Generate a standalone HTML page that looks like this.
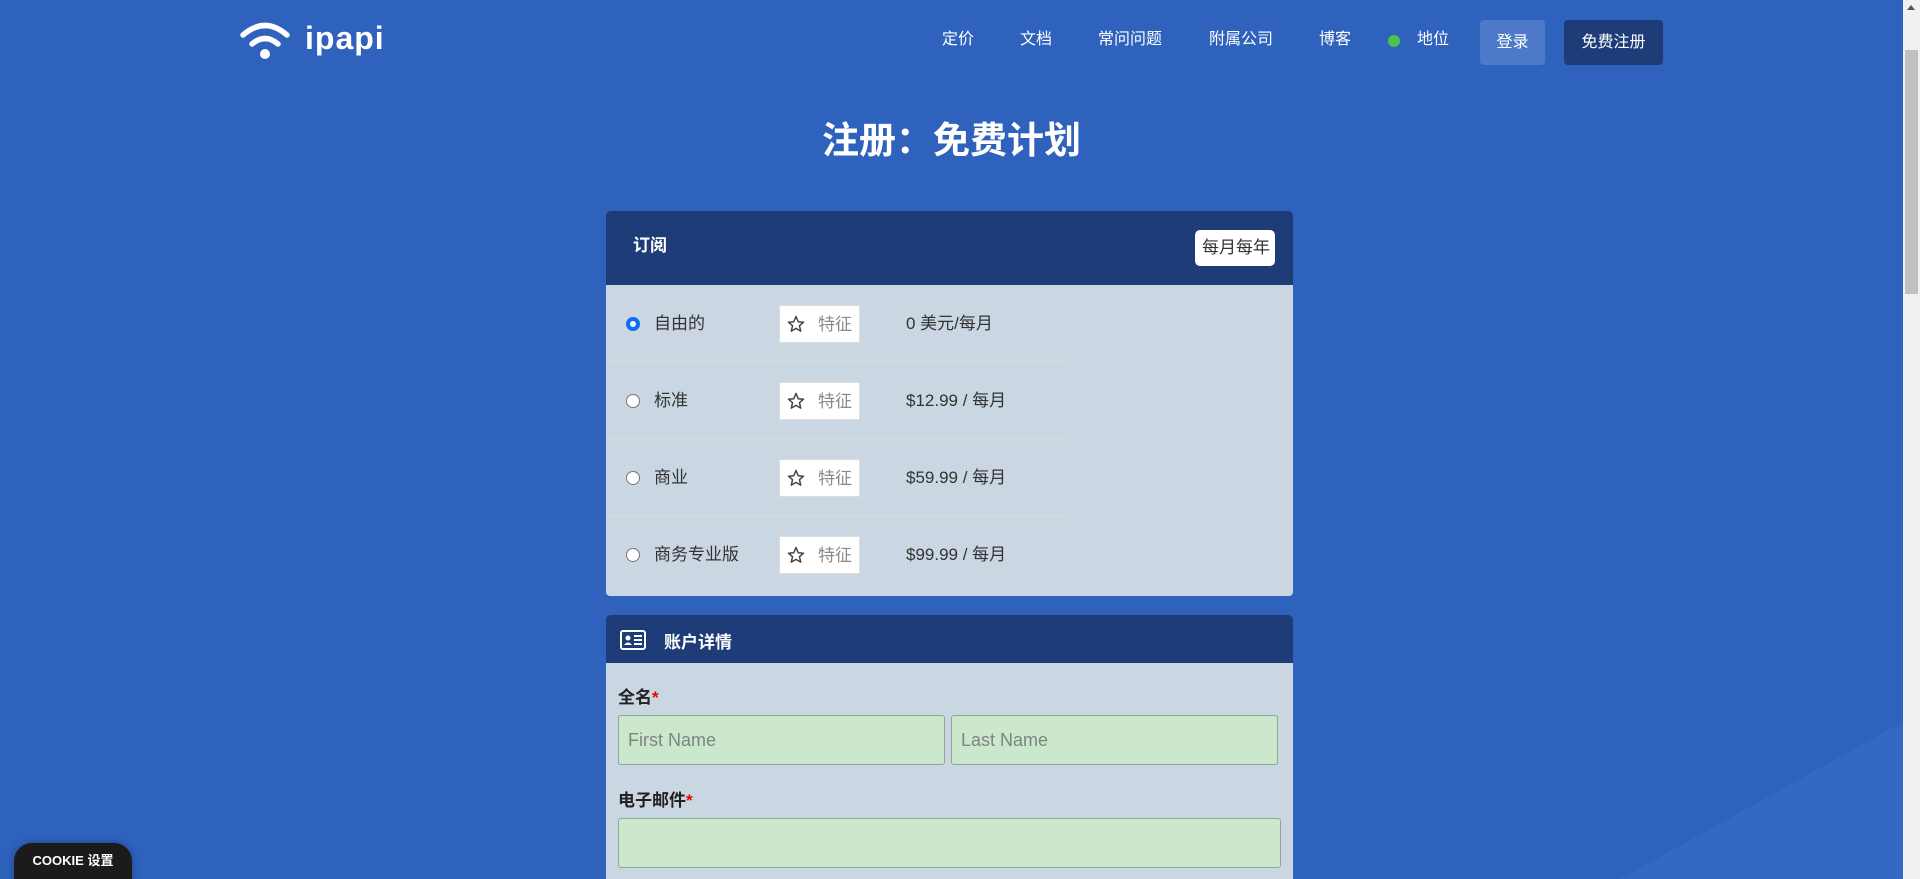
<!DOCTYPE html>
<html style="overflow:hidden;height:879px"><head><meta charset="utf-8"><style>
*{box-sizing:border-box;margin:0;padding:0}
body{width:1920px;height:879px;overflow:hidden;background:#2e62bd;font-family:"Liberation Sans","Noto Sans CJK SC",sans-serif;position:relative;color:#333}
.stripe{position:absolute;left:0;top:0;width:1903px;height:879px}
.nav a{position:absolute;top:30px;color:#fff;font-size:16px;text-decoration:none;line-height:20px}
.btn{position:absolute;top:20px;height:45px;border-radius:4px;color:#fff;font-size:16px;line-height:45px;text-align:center}
h1{position:absolute;left:0;width:1903px;top:116px;text-align:center;color:#fff;font-size:37px;font-weight:bold;line-height:50px}
.card{position:absolute;left:606px;width:687px;border-radius:4px;overflow:hidden;background:#cad6e2}
.hd{background:#1d3c78;color:#fff;position:relative}
.row{position:relative;height:77px;font-size:17px}
.row .sep{position:absolute;left:0;bottom:0;width:463px;height:1px;background:#d6dde5}
.radio{position:absolute;left:20px;top:32px;width:14px;height:14px;border-radius:50%;border:1px solid #767676;background:#fff}
.lbl{position:absolute;left:48px;top:27px;line-height:24px}
.feat{position:absolute;left:173px;top:20px;width:81px;height:38px;background:#fff;border:1px solid #ddd;color:#8a8a8a;font-size:17px;line-height:38px;padding-left:38px}
.feat svg{position:absolute;left:7px;top:9px}
.price{position:absolute;left:300px;top:27px;line-height:24px}
.flab{position:absolute;left:12px;font-weight:bold;font-size:17px;color:#222}
.flab b{color:#e00}
.inp{position:absolute;height:50px;background:#cce8cc;border:1px solid #8fa89a;border-radius:3px;color:#7b8580;font-size:18px;line-height:48px;padding-left:9px}
.sb{position:absolute;right:0;top:0;width:17px;height:879px;background:#f1f1f1}
</style></head><body>
<svg class="stripe" viewBox="0 0 1903 879"><polygon points="1620,879 1903,722 1903,879" fill="#3468c2"/></svg>
<svg style="position:absolute;left:239px;top:22px" width="52" height="38" viewBox="0 0 52 38">
<path d="M4 13 Q26 -6 48 13" stroke="#fff" stroke-width="5.5" fill="none" stroke-linecap="round"/>
<path d="M13 22 Q26 11 39 22" stroke="#fff" stroke-width="5.5" fill="none" stroke-linecap="round"/>
<circle cx="26" cy="32" r="5" fill="#fff"/></svg>
<div style="position:absolute;left:305px;top:20px;color:#fff;font-size:32px;font-weight:bold;letter-spacing:1px">ipapi</div>
<div class="nav">
<a style="left:942px">定价</a><a style="left:1020px">文档</a><a style="left:1098px">常问问题</a><a style="left:1209px">附属公司</a><a style="left:1319px">博客</a>
<span style="position:absolute;left:1388px;top:35px;width:12px;height:12px;border-radius:50%;background:#4cc44a"></span>
<a style="left:1417px">地位</a></div>
<div class="btn" style="left:1480px;width:65px;background:#4d7ac8">登录</div>
<div class="btn" style="left:1564px;width:99px;background:#1d3c78">免费注册</div>
<h1>注册：免费计划</h1>
<div class="card" style="top:211px;height:385px">
<div class="hd" style="height:74px"><span style="position:absolute;left:27px;top:20px;font-weight:bold;font-size:17px">订阅</span>
<span style="position:absolute;left:589px;top:19px;width:80px;height:36px;background:#fff;border-radius:5px;color:#333;font-size:17px;line-height:36px;padding-left:7px;white-space:nowrap;overflow:hidden">每月每年</span></div>
<div class="row"><span class="radio" style="border:4px solid #0b6ff0"></span><span class="lbl">自由的</span><span class="feat"><svg width="18" height="18" viewBox="0 0 24 24"><path d="M12 2l3 7 7 .6-5.4 4.7 1.7 7.2L12 17.8 5.7 21.5l1.7-7.2L2 9.6 9 9z" fill="none" stroke="#444" stroke-width="2" stroke-linejoin="round"/></svg>特征</span><span class="price">0 美元/每月</span><span class="sep"></span></div>
<div class="row"><span class="radio"></span><span class="lbl">标准</span><span class="feat"><svg width="18" height="18" viewBox="0 0 24 24"><path d="M12 2l3 7 7 .6-5.4 4.7 1.7 7.2L12 17.8 5.7 21.5l1.7-7.2L2 9.6 9 9z" fill="none" stroke="#444" stroke-width="2" stroke-linejoin="round"/></svg>特征</span><span class="price">$12.99 / 每月</span><span class="sep"></span></div>
<div class="row"><span class="radio"></span><span class="lbl">商业</span><span class="feat"><svg width="18" height="18" viewBox="0 0 24 24"><path d="M12 2l3 7 7 .6-5.4 4.7 1.7 7.2L12 17.8 5.7 21.5l1.7-7.2L2 9.6 9 9z" fill="none" stroke="#444" stroke-width="2" stroke-linejoin="round"/></svg>特征</span><span class="price">$59.99 / 每月</span><span class="sep"></span></div>
<div class="row"><span class="radio"></span><span class="lbl">商务专业版</span><span class="feat"><svg width="18" height="18" viewBox="0 0 24 24"><path d="M12 2l3 7 7 .6-5.4 4.7 1.7 7.2L12 17.8 5.7 21.5l1.7-7.2L2 9.6 9 9z" fill="none" stroke="#444" stroke-width="2" stroke-linejoin="round"/></svg>特征</span><span class="price">$99.99 / 每月</span></div>
</div>
<div class="card" style="top:615px;height:264px;border-radius:4px 4px 0 0">
<div class="hd" style="height:48px">
<svg style="position:absolute;left:14px;top:15px" width="26" height="20" viewBox="0 0 26 20"><rect x="1" y="1" width="24" height="18" rx="2" fill="none" stroke="#fff" stroke-width="2"/><circle cx="8" cy="8" r="2.5" fill="#fff"/><path d="M4 15q4-5 8 0z" fill="#fff"/><path d="M14 6h8M14 10h8M14 14h8" stroke="#fff" stroke-width="2"/></svg>
<span style="position:absolute;left:58px;top:13px;font-weight:bold;font-size:17px">账户详情</span></div>
<span class="flab" style="top:68px">全名<b>*</b></span>
<div class="inp" style="left:12px;top:100px;width:327px">First Name</div>
<div class="inp" style="left:345px;top:100px;width:327px">Last Name</div>
<span class="flab" style="top:171px">电子邮件<b>*</b></span>
<div class="inp" style="left:12px;top:203px;width:663px"></div>
</div>
<div style="position:absolute;left:14px;top:843px;width:118px;height:40px;background:#1b1b1b;border-radius:18px 18px 0 0;color:#fff;font-weight:bold;font-size:13px;line-height:36px;text-align:center;box-shadow:0 0 8px rgba(0,0,0,.3)">COOKIE 设置</div>
<div class="sb"><div style="position:absolute;left:2px;top:50px;width:13px;height:244px;background:#c1c1c1"></div>
<div style="position:absolute;left:4px;top:5px;border:4px solid transparent;border-bottom:5px solid #555;border-top:0"></div></div>
</body></html>
